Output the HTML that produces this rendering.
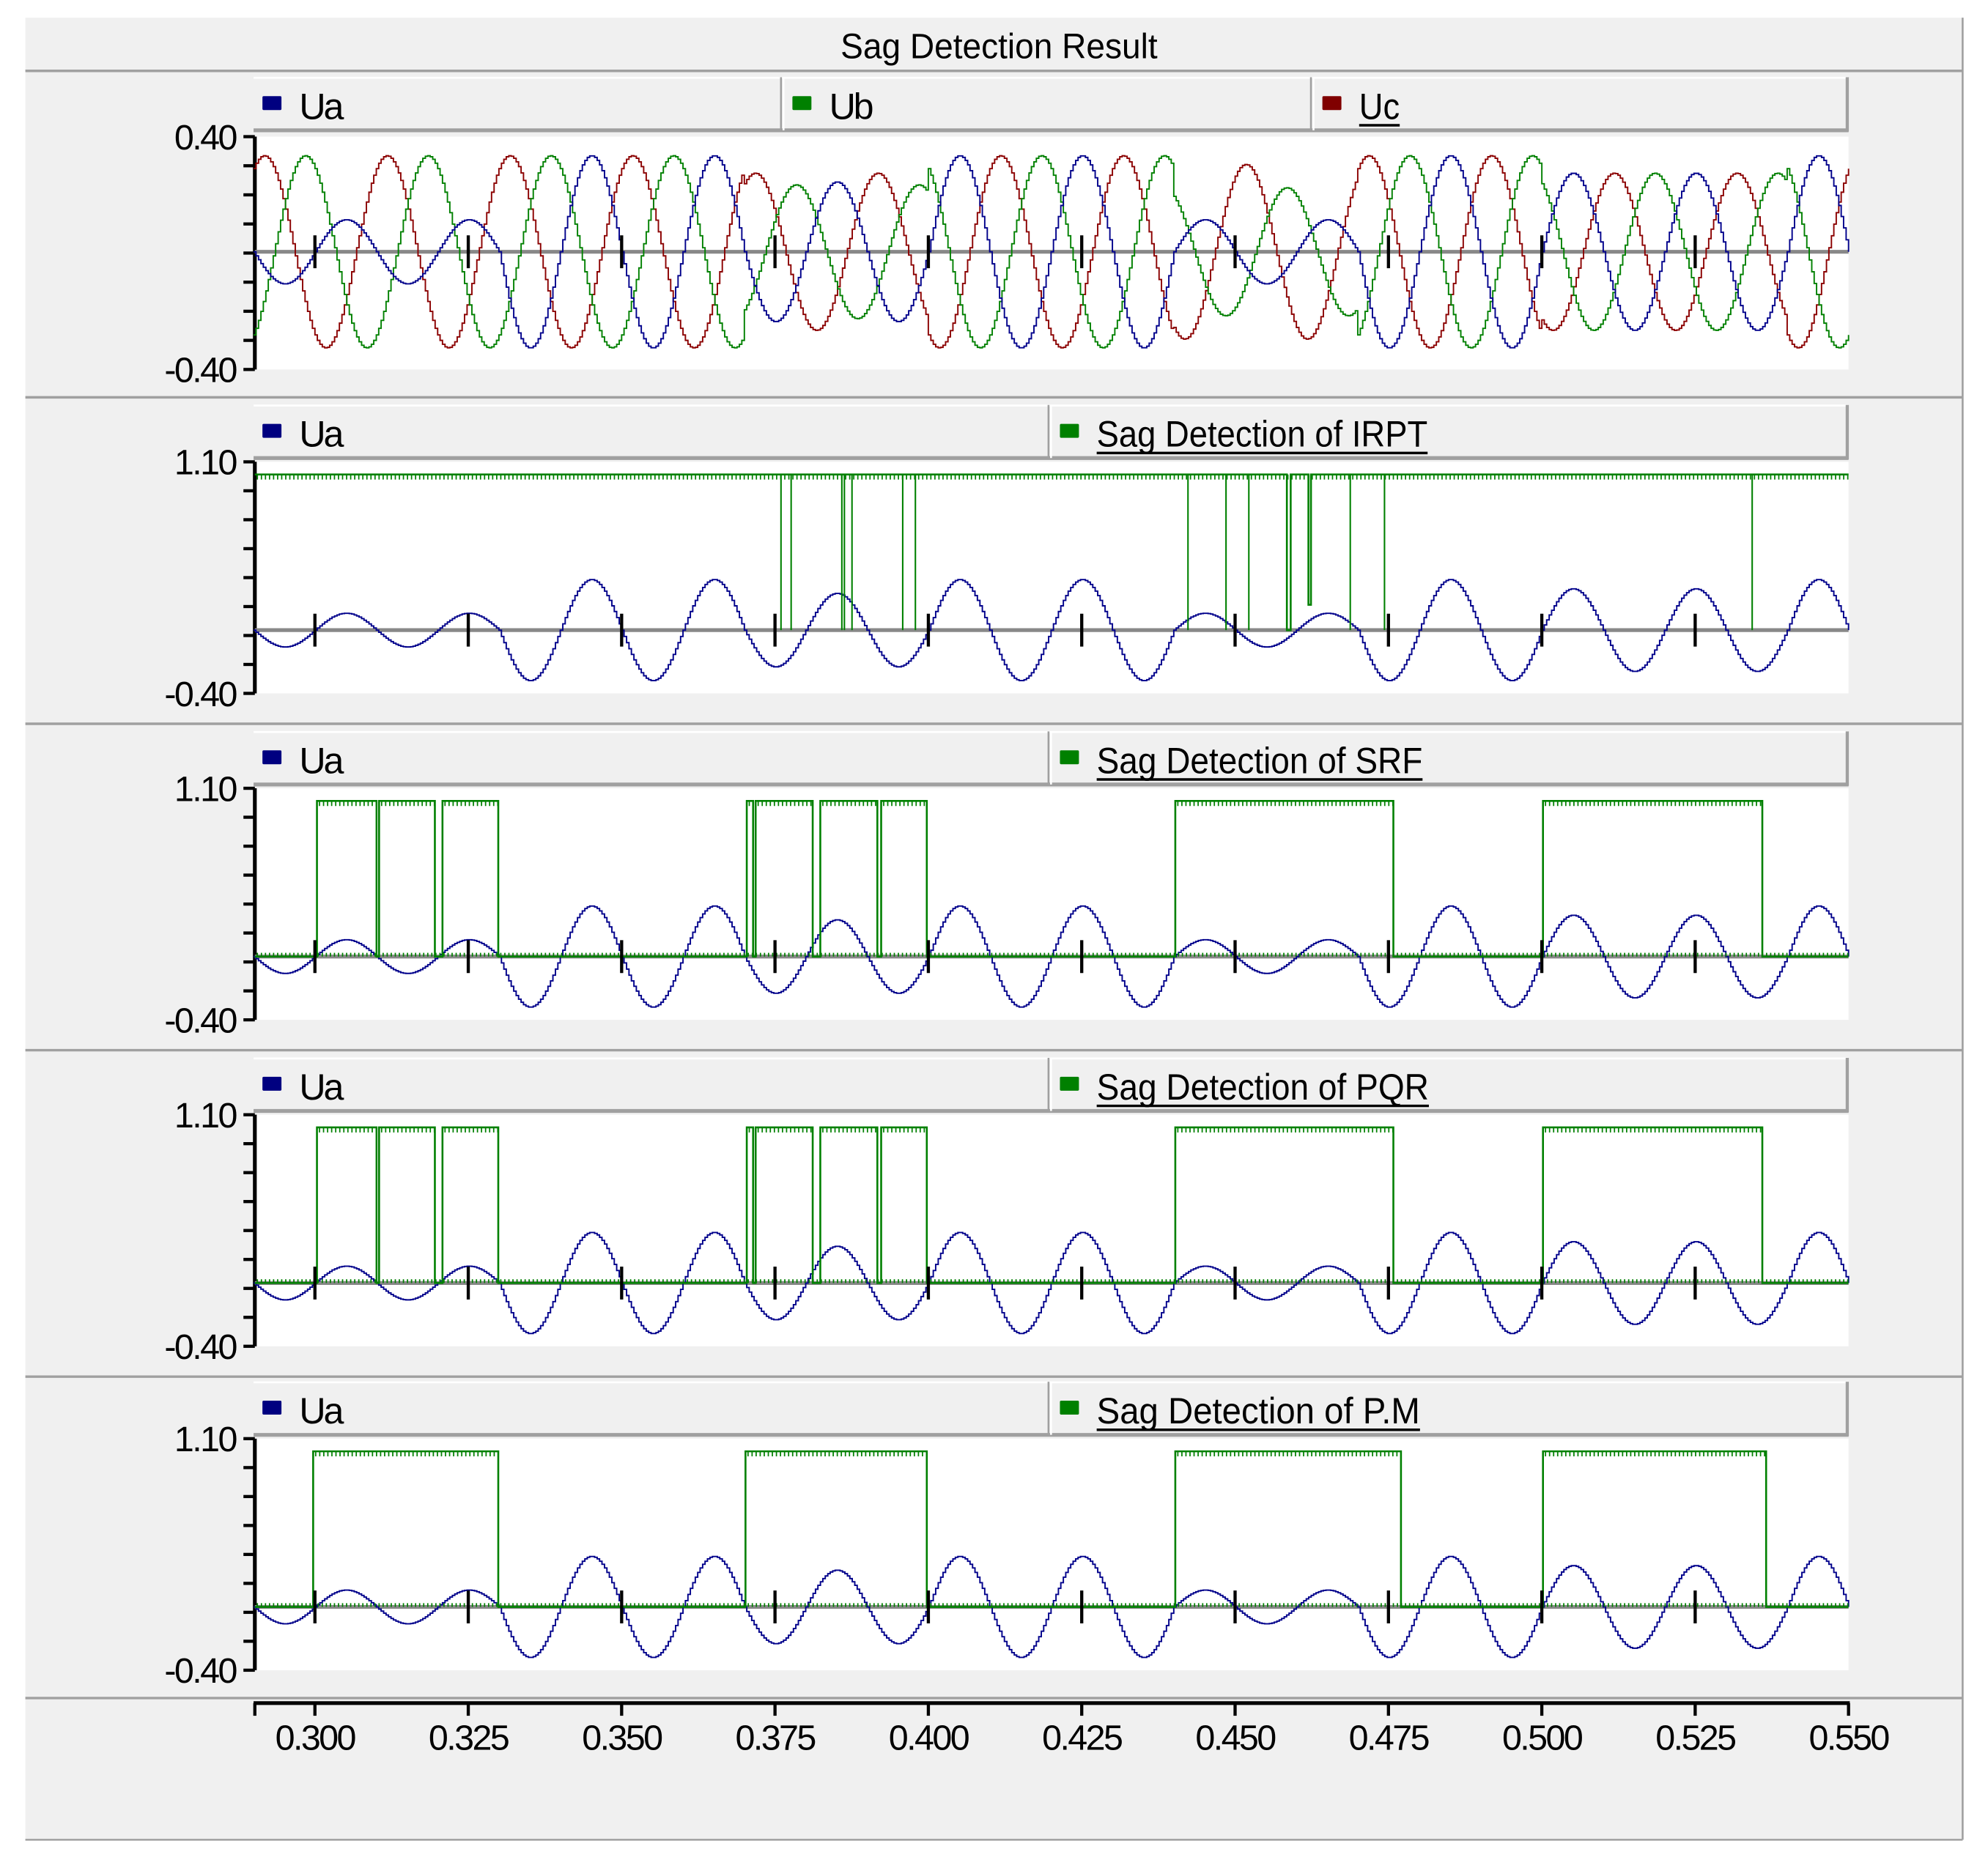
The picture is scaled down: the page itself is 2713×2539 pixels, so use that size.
<!DOCTYPE html>
<html><head><meta charset="utf-8"><style>
html,body{margin:0;padding:0;background:#fff;}
svg{display:block;}
text{font-family:"Liberation Sans",sans-serif;fill:#000;}
</style></head><body>
<svg id="s" width="2713" height="2539" viewBox="0 0 1568 1470" preserveAspectRatio="none" xmlns="http://www.w3.org/2000/svg">
<rect x="0" y="0" width="1568" height="1470" fill="#fff"/>
<rect x="20" y="14" width="1528" height="1440" fill="#f0f0f0"/>
<line x1="1548" y1="14" x2="1548" y2="1454" stroke="#a0a0a0" stroke-width="1.5"/>
<line x1="20" y1="1454" x2="1548" y2="1454" stroke="#a0a0a0" stroke-width="1.5"/>
<text x="663" y="46" font-size="28" textLength="250" lengthAdjust="spacingAndGlyphs">Sag Detection Result</text>
<g id="g"></g>
</svg>
<script>
(function(){
var NS="http://www.w3.org/2000/svg",g=document.getElementById('g');
function el(n,a,t){var e=document.createElementNS(NS,n);for(var k in a)e.setAttribute(k,a[k]);if(t)e.textContent=t;g.appendChild(e);return e;}
function X(t){return 200+(t-0.29)/0.26*1258;}
[56,314,572,830,1088,1342].forEach(function(y){el('line',{x1:20,y1:y,x2:1548,y2:y,stroke:'#a0a0a0','stroke-width':2});});
function amp(t,list){for(var i=0;i<list.length;i++){if(t>=list[i][0]&&t<list[i][1])return list[i][2];}return 0.33;}
var sagA=[[0.28,0.33,0.11],[0.37,0.40,0.24],[0.44,0.47,0.11],[0.50,0.54,0.27]];
var sagB=[[0.37,0.40,0.23],[0.44,0.47,0.22],[0.50,0.54,0.27]];
var sagC=[[0.37,0.40,0.27],[0.44,0.47,0.30],[0.50,0.54,0.27]];
function wave(sag,ph,yz,sc,col){
  var d='',dt=0.0004,t=0.29,first=true;
  for(;t<=0.5500001;t+=dt){
    var v=amp(t,sag)*Math.sin(100*Math.PI*t+ph);
    var x=X(t),y=yz-v*sc;
    if(first){d+='M'+x.toFixed(1)+' '+y.toFixed(1);first=false;}
    else d+='V'+y.toFixed(1);
    d+='H'+Math.min(1458,X(t+dt)).toFixed(1);
  }
  el('path',{d:d,fill:'none',stroke:col,'stroke-width':1.1});
}
function legend(y,items){
  el('rect',{x:200,y:y,width:1258,height:43,fill:'#f0f0f0'});
  el('line',{x1:200,y1:y+0.5,x2:1458,y2:y+0.5,stroke:'#fff','stroke-width':1.5});
  el('line',{x1:200,y1:y+42,x2:1458,y2:y+42,stroke:'#a0a0a0','stroke-width':3});
  el('line',{x1:1457,y1:y,x2:1457,y2:y+43,stroke:'#a0a0a0','stroke-width':2.5});
  items.forEach(function(it){
    if(it.div){el('line',{x1:it.x-2,y1:y,x2:it.x-2,y2:y+42,stroke:'#a0a0a0','stroke-width':1.5});el('line',{x1:it.x,y1:y,x2:it.x,y2:y+42,stroke:'#fff','stroke-width':1.5});}
    el('rect',{x:it.x+7,y:y+15,width:15,height:11,fill:it.c,rx:1});
    var a={x:it.x+36,y:y+33,'font-size':29,'letter-spacing':'-1.8'};
    if(it.w){a.textLength=it.w;a.lengthAdjust='spacingAndGlyphs';delete a['letter-spacing'];}
    el('text',a,it.t);
    if(it.u){el('line',{x1:it.x+36,y1:y+38,x2:it.x+36+it.w,y2:y+38,stroke:'#000','stroke-width':2});}
  });
}
function axes(tp,bot,yz,lt,lb){
  el('rect',{x:200,y:tp,width:1258,height:bot-tp,fill:'#fff'});
  el('line',{x1:201,y1:tp,x2:201,y2:bot,stroke:'#000','stroke-width':3});
  for(var i=0;i<=8;i++){var y=tp+(bot-tp)*i/8;el('line',{x1:192,y1:y,x2:201,y2:y,stroke:'#000','stroke-width':2.5});}
  el('text',{x:186,y:tp+10,'font-size':28,'text-anchor':'end','letter-spacing':'-1.5'},lt);
  el('text',{x:186,y:bot+10,'font-size':28,'text-anchor':'end','letter-spacing':'-1.5'},lb);
  el('line',{x1:201,y1:yz,x2:1458,y2:yz,stroke:'#888','stroke-width':3});
}
function zticks(yz){for(var k=0;k<10;k++){var x=X(0.3+k*0.025);el('line',{x1:x,y1:yz-13,x2:x,y2:yz+13,stroke:'#000','stroke-width':2.5});}}
function det(yz,hi,on){
  var d='M201 '+yz;on.forEach(function(a){d+='H'+a[0]+'V'+hi+'H'+a[1]+'V'+yz;});d+='H1458';
  el('path',{d:d,fill:'none',stroke:'#008000','stroke-width':1.5});
  var dd='';on.forEach(function(a){for(var x=a[0]+2;x<a[1];x+=3.2)dd+='M'+x.toFixed(1)+' '+hi+'v4';});
  for(var x=203;x<1458;x+=3.2)dd+='M'+x.toFixed(1)+' '+yz+'v-3';
  el('path',{d:dd,stroke:'#008000','stroke-width':1,fill:'none'});
}
legend(61,[{x:200,c:'#000080',t:'Ua'},{x:618,c:'#008000',t:'Ub',div:1},{x:1036,c:'#800000',t:'Uc',div:1,u:1,w:32}]);
axes(108,292,199,'0.40','-0.40');
wave(sagC,-2*Math.PI/3,199,230,'#8b0000');
wave(sagB,2*Math.PI/3,199,230,'#008000');
wave(sagA,0,199,230,'#00008b');
zticks(199);
var names=['IRPT','SRF','PQR','P.M'],base=[320,578,836,1092];
var uw=[261,257,262,255];
var srf=[[250,297],[299,343],[349,393],[589,594],[596,641],[647,692],[695,731],[927,1099],[1217,1390]];
var pm=[[247,393],[588,731],[927,1105],[1217,1393]];
for(var p=0;p<4;p++){
  var ly=base[p],tp=ly+45,bot=tp+183,yz=tp+133,hi=tp+10;
  legend(ly,[{x:200,c:'#000080',t:'Ua'},{x:829,c:'#008000',t:'Sag Detection of '+names[p],div:1,u:1,w:uw[p]}]);
  axes(tp,bot,yz,'1.10','-0.40');
  wave(sagA,0,yz,121,'#00008b');
  if(p==0){
    el('path',{d:'M201 '+hi+'H1015V'+yz+'H1018V'+hi+'H1032V'+(yz-20)+'H1034V'+hi+'H1458',fill:'none',stroke:'#008000','stroke-width':1.5});
    var dd='';for(var x=203;x<1458;x+=3.2)dd+='M'+x.toFixed(1)+' '+hi+'v4';
    el('path',{d:dd,stroke:'#008000','stroke-width':1,fill:'none'});
    [616,624,664,666,672,712,722,937,967,985,1065,1092,1382].forEach(function(x){el('line',{x1:x,y1:hi,x2:x,y2:yz,stroke:'#008000','stroke-width':1.2});});
  } else det(yz,hi,p==3?pm:srf);
  zticks(yz);
}
el('line',{x1:200,y1:1346,x2:1459,y2:1346,stroke:'#000','stroke-width':3});
for(var k=0;k<=10;k++){var t=0.3+k*0.025,x=X(t);
  el('line',{x1:x,y1:1346,x2:x,y2:1356,stroke:'#000','stroke-width':2.5});
  el('text',{x:x,y:1383,'font-size':28,'text-anchor':'middle','letter-spacing':'-1.5'},t.toFixed(3));}
el('line',{x1:201,y1:1346,x2:201,y2:1356,stroke:'#000','stroke-width':2.5});
})();
</script>
</body></html>
